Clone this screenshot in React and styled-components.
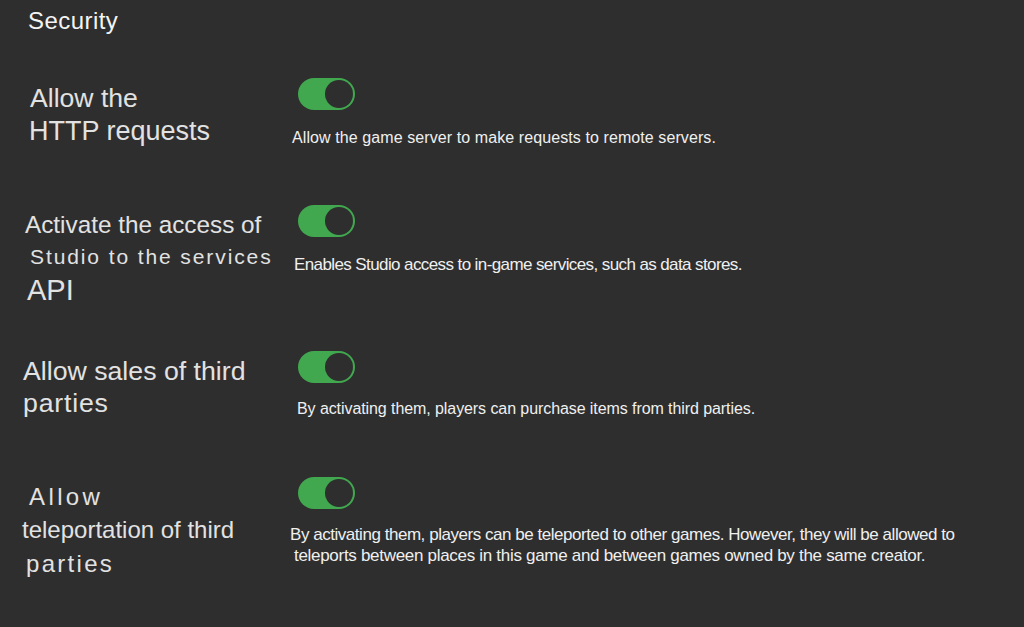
import React from "react";
import styled, { createGlobalStyle } from "styled-components";

const Global = createGlobalStyle`
  html, body {
    margin: 0;
    padding: 0;
    background: #2e2e2e;
  }
  body {
    font-family: "Liberation Sans", Arial, sans-serif;
    -webkit-font-smoothing: antialiased;
  }
`;

const Page = styled.main`
  width: 1024px;
  height: 627px;
  box-sizing: border-box;
  background: #2e2e2e;
  overflow: hidden;
  display: flex;
  flex-direction: column;
`;

const Title = styled.h1`
  margin: 0;
  padding: 6px 0 0 28px;
  font-size: 24px;
  line-height: 30px;
  letter-spacing: 0.45px;
  font-weight: 400;
  color: #f4f4f4;
  height: 72px;
`;

const Row = styled.section`
  display: grid;
  grid-template-columns: 290px 1fr;
  min-height: ${(p) => p.$height}px;
  align-items: start;
`;

const Label = styled.div`
  display: flex;
  flex-direction: column;
  padding-top: ${(p) => p.$top}px;
  color: #e2e2e2;
`;

const Line = styled.span`
  display: block;
  white-space: nowrap;
  padding-left: ${(p) => p.$indent}px;
  font-size: ${(p) => p.$size}px;
  line-height: ${(p) => p.$lh}px;
  letter-spacing: ${(p) => p.$spacing || 0}px;
`;

const Control = styled.div`
  display: flex;
  flex-direction: column;
  align-items: flex-start;
`;

const Switch = styled.button`
  position: relative;
  width: 57px;
  height: 32px;
  margin-left: 8px;
  padding: 0;
  border: none;
  border-radius: 16px;
  background: #41a84f;
  cursor: pointer;
  &::after {
    content: "";
    position: absolute;
    top: 2px;
    right: 2px;
    width: 28px;
    height: 28px;
    border-radius: 50%;
    background: #2e2e2e;
  }
`;

const Description = styled.div`
  margin-top: ${(p) => p.$gap}px;
  color: #f0f0f0;
`;

const DescLine = styled.span`
  display: block;
  white-space: pre;
  padding-left: ${(p) => p.$indent}px;
  font-size: ${(p) => p.$size}px;
  line-height: 21px;
  letter-spacing: ${(p) => p.$spacing}px;
`;

const settings = [
  {
    height: 127,
    top: 4,
    lines: [
      { text: "Allow the", indent: 30, size: 26.6, lh: 33 },
      { text: "HTTP requests", indent: 29, size: 27, lh: 33 },
    ],
    desc: [{ text: "Allow the game server to make requests to remote servers.", indent: 2, size: 16, spacing: 0.09 }],
    gap: 17,
  },
  {
    height: 146,
    top: 4,
    lines: [
      { text: "Activate the access of", indent: 25, size: 24.3, lh: 31 },
      { text: "Studio to the services", indent: 30, size: 21, lh: 33, spacing: 1.9 },
      { text: "API", indent: 27, size: 29, lh: 35 },
    ],
    desc: [{ text: "Enables Studio access to in-game services, such as data stores.", indent: 4, size: 17, spacing: -0.6 }],
    gap: 17,
  },
  {
    height: 126,
    top: 4,
    lines: [
      { text: "Allow sales of third", indent: 23, size: 26.7, lh: 32 },
      { text: "parties", indent: 23, size: 26.7, lh: 32, spacing: 0.8 },
    ],
    desc: [{ text: "By activating them, players can purchase items from third parties.", indent: 7, size: 16, spacing: -0.08 }],
    gap: 15,
  },
  {
    height: 150,
    top: 5,
    lines: [
      { text: "Allow", indent: 29, size: 24, lh: 30, spacing: 3.4 },
      { text: "teleportation of third", indent: 22, size: 24, lh: 36 },
      { text: "parties", indent: 26, size: 24, lh: 32, spacing: 2.3 },
    ],
    desc: [
      { text: "By activating them, players can be teleported to other games. However, they will be allowed to", indent: 0, size: 17, spacing: -0.46 },
      { text: "teleports between places in this game and between games owned by the same creator.", indent: 4, size: 17, spacing: -0.3 },
    ],
    gap: 15,
  },
];

export default function App() {
  return (
    <Page>
      <Global />
      <Title>Security</Title>
      {settings.map((s, i) => (
        <Row key={i} $height={s.height}>
          <Label $top={s.top}>
            {s.lines.map((l, j) => (
              <Line key={j} $indent={l.indent} $size={l.size} $lh={l.lh} $spacing={l.spacing}>
                {l.text}
              </Line>
            ))}
          </Label>
          <Control>
            <Switch aria-label="toggle" />
            <Description $gap={s.gap}>
              {s.desc.map((d, j) => (
                <DescLine key={j} $indent={d.indent} $size={d.size} $spacing={d.spacing}>
                  {d.text}
                </DescLine>
              ))}
            </Description>
          </Control>
        </Row>
      ))}
    </Page>
  );
}
